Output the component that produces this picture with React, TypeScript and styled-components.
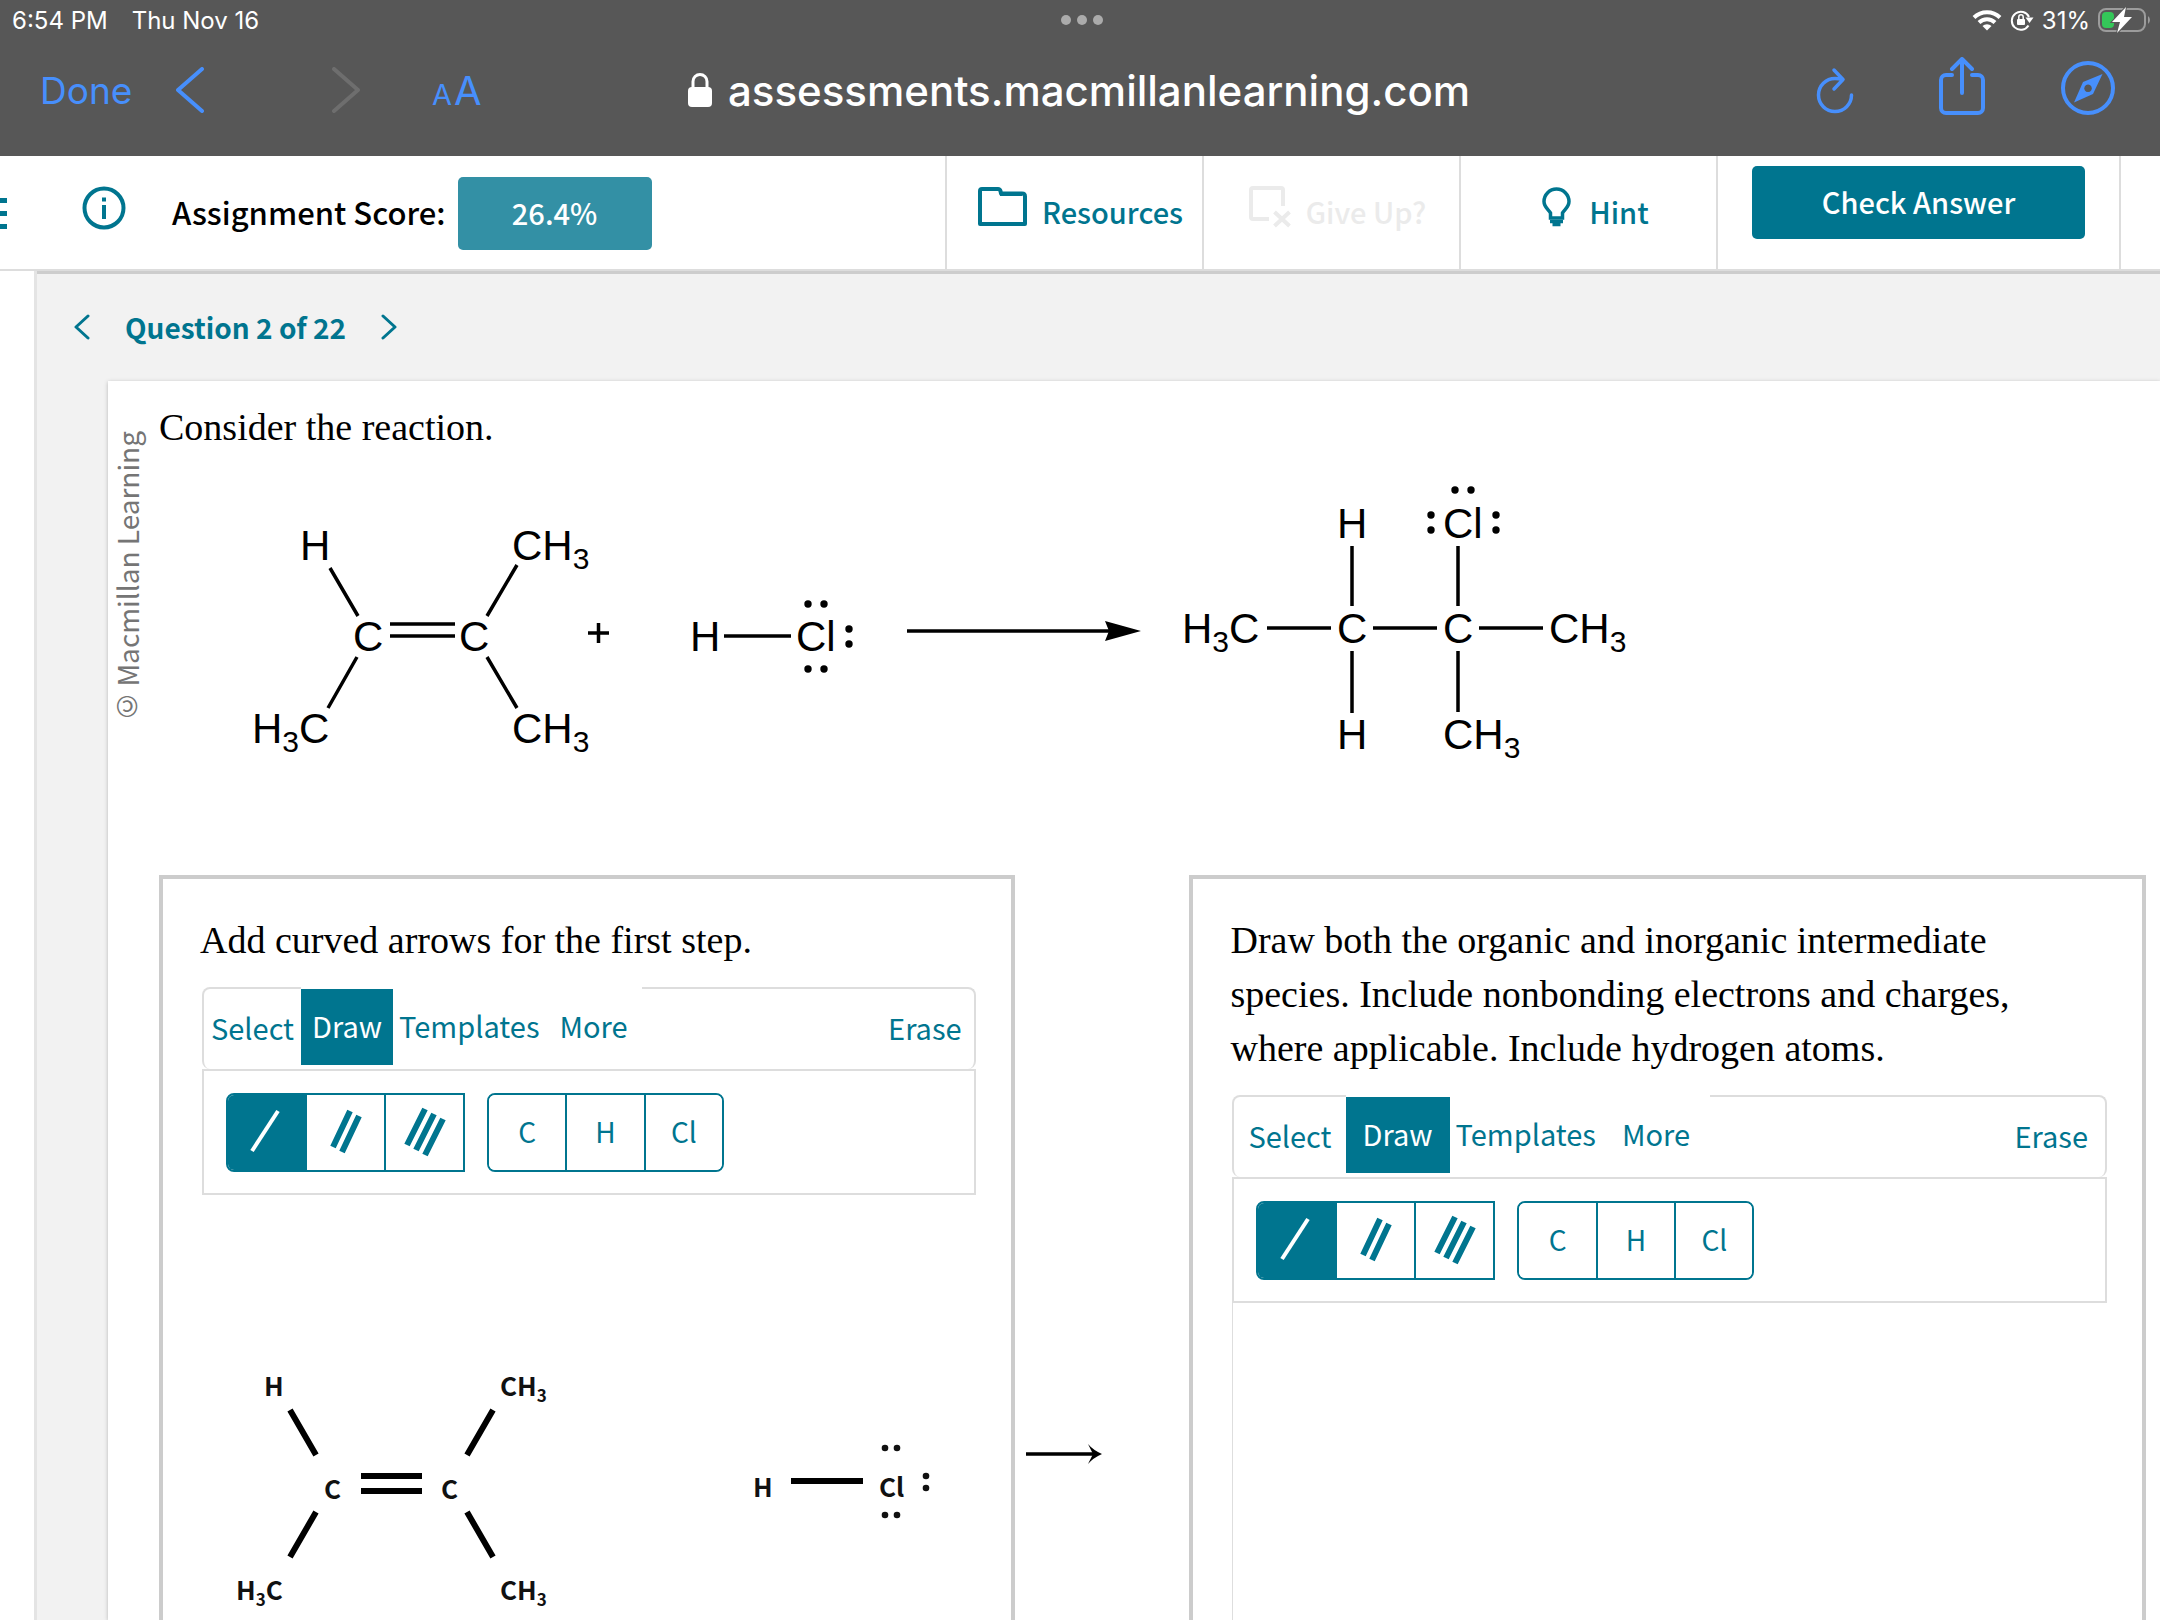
import React from 'react';
import styled, { createGlobalStyle, css } from 'styled-components';

const sans = "'Noto Sans CJK SC', 'Noto Sans', sans-serif";
const system = "Inter, 'Liberation Sans', sans-serif";
const serif = "'Liberation Serif', 'Times New Roman', serif";
const teal = '#00758f';
const line = '#dddddd';
const blue = '#478ffc';

const GlobalStyle = createGlobalStyle`
  * { box-sizing: border-box; }
  body { margin: 0; background: #fff; overflow: hidden; }
  button { margin: 0; padding: 0; border: 0; background: none; font: inherit; color: inherit; cursor: pointer; }
  p { margin: 0; }
  svg { display: block; flex: none; }
`;

const Page = styled.div`
  display: flex;
  flex-direction: column;
  height: 100vh;
  overflow: hidden;
  font-family: ${sans};
`;

/* ---------- browser chrome ---------- */

const Chrome = styled.header`
  flex: none;
  background: #575757;
  color: #fff;
  font-family: ${system};
  padding-bottom: 16px;
`;

const ChromeRow = styled.div`
  display: grid;
  grid-template-columns: 1fr auto 1fr;
  align-items: center;
`;

const StatusRow = styled(ChromeRow)`
  height: 40px;
  padding: 0 8px 0 12px;
  font-size: 24px;
`;

const NavRow = styled(ChromeRow)`
  height: 100px;
  padding: 0 42px 0 40px;
`;

const Clock = styled.div`
  display: flex;
  gap: 24px;
`;

const StatusIcons = styled.div`
  display: flex;
  justify-content: flex-end;
  align-items: center;
  gap: 8px;
`;

const NavLeft = styled.div`
  display: flex;
  align-items: center;
  color: ${blue};
`;

const DoneButton = styled.button`
  font-size: 37px;
  width: 136px;
  text-align: left;
`;

const ArrowButton = styled.button<{ $off?: boolean }>`
  color: ${(p) => (p.$off ? '#6e6e6e' : blue)};
  width: ${(p) => (p.$off ? '100px' : '156px')};
`;

const TextSize = styled.button`
  display: flex;
  align-items: baseline;
  gap: 2px;
  font-size: 40px;
  small { font-size: 29px; }
`;

const Address = styled.div`
  display: flex;
  align-items: center;
  gap: 16px;
  font-size: 42px;
  font-weight: 500;
`;

const NavRight = styled.div`
  display: flex;
  justify-content: flex-end;
  align-items: center;
  gap: 66px;
  color: ${blue};
`;

/* ---------- assignment bar ---------- */

const AssignmentBar = styled.div`
  flex: none;
  display: flex;
  height: 115px;
  padding-right: 39px;
  border-bottom: 2px solid ${line};
  font-size: 29px;
  font-weight: 500;
`;

const ScoreArea = styled.div`
  flex: 1;
  display: flex;
  align-items: center;
  padding-top: 2px;
  color: #000;
`;

const raised = css`
  svg { margin-bottom: 12px; }
`;

const InfoButton = styled.button`
  ${raised}
  margin: 0 46px 0 74px;
  color: ${teal};
`;

const Score = styled.output`
  display: flex;
  align-items: center;
  justify-content: center;
  width: 194px;
  height: 73px;
  margin-left: 12px;
  padding-bottom: 4px;
  border-radius: 5px;
  background: #3390a5;
  color: #fff;
`;

const Label = styled.span<{ $large?: boolean }>`
  padding-bottom: 4px;
  font-size: ${(p) => (p.$large ? '31px' : '29px')};
`;

const BarButton = styled.button`
  ${raised}
  display: flex;
  align-items: center;
  justify-content: center;
  gap: 15px;
  width: 257px;
  padding-left: 12px;
  border-left: 2px solid ${line};
  color: ${teal};
  &:disabled { color: #ebebeb; cursor: default; }
`;

const CheckCell = styled.div`
  display: flex;
  align-items: center;
  justify-content: center;
  width: 405px;
  padding-bottom: 20px;
  border: solid ${line};
  border-width: 0 2px;
`;

const CheckButton = styled.button`
  width: 333px;
  height: 73px;
  padding-bottom: 4px;
  border-radius: 5px;
  background: ${teal};
  color: #fff;
`;

/* ---------- question ---------- */

const Body = styled.div`
  flex: 1;
  display: flex;
  min-height: 0;
`;

const Sidebar = styled.aside`
  flex: none;
  width: 37px;
  border-right: 3px solid #e4e4e4;
`;

const Main = styled.main`
  flex: 1;
  min-width: 0;
  display: flex;
  flex-direction: column;
  background: #f2f2f2;
  border-top: 3px solid #cdcdcd;
`;

const QuestionNav = styled.nav`
  flex: none;
  display: flex;
  align-items: center;
  gap: 35px;
  height: 107px;
  padding: 0 0 2px 37px;
  color: ${teal};
  font-size: 28px;
  font-weight: 700;
`;

const Card = styled.section`
  flex: 1;
  display: flex;
  min-height: 0;
  margin-left: 71px;
  background: #fff;
  box-shadow: 0 1px 4px rgba(0, 0, 0, 0.25);
`;

const Copyright = styled.div`
  flex: none;
  width: 51px;
  padding-top: 50px;
  span {
    display: block;
    writing-mode: vertical-rl;
    transform: rotate(180deg);
    width: 38px;
    line-height: 38px;
    font-size: 28px;
    color: #757575;
  }
`;

const Content = styled.div`
  flex: 1;
  min-width: 0;
  display: flex;
  flex-direction: column;
  padding: 19px 14px 0 0;
`;

const Prose = styled.p`
  font-family: ${serif};
  font-size: 38px;
  line-height: 54px;
  color: #000;
`;

const Figure = styled.figure`
  margin: 23px 0 108px;
`;

const Steps = styled.div`
  flex: 1;
  min-height: 0;
  display: grid;
  grid-template-columns: 856fr 175fr 957fr;
`;

const Panel = styled.section`
  display: flex;
  flex-direction: column;
  min-width: 0;
  padding: 34px 35px 0 37px;
  border: 4px solid #cccccc;
  border-bottom: 0;
`;

const StepArrow = styled.div`
  padding: 568px 0 0 11px;
`;

const Editor = styled.div`
  flex: 1;
  display: flex;
  flex-direction: column;
  margin: 20px 0 0 2px;
  color: ${teal};
  font-size: 29px;
`;

const Menu = styled.div`
  display: flex;
  height: 82px;
  border: 2px solid ${line};
  border-bottom: 0;
  border-radius: 8px;
`;

const MenuButton = styled.button<{ $pad: number }>`
  padding: 0 ${(p) => p.$pad}px 4px;
`;

const Tabs = styled.div`
  display: flex;
  align-self: flex-start;
  margin-top: -2px;
  border-top: 2px solid #fff;
`;

const Tab = styled.button<{ $pad: number; $active?: boolean }>`
  height: 76px;
  padding: 0 ${(p) => p.$pad}px 4px;
  background: ${(p) => (p.$active ? teal : 'transparent')};
  color: ${(p) => (p.$active ? '#fff' : teal)};
`;

const EraseButton = styled(MenuButton)`
  margin-left: auto;
`;

const Tools = styled.div`
  display: flex;
  gap: 22px;
  height: 126px;
  padding: 22px;
  border: 2px solid ${line};
`;

const Group = styled.div<{ $round?: boolean }>`
  display: flex;
  width: ${(p) => (p.$round ? '237px' : '239px')};
  height: 79px;
  border: 2px solid ${teal};
  border-radius: ${(p) => (p.$round ? '8px' : '8px 0 0 8px')};
  overflow: hidden;
`;

const ToolButton = styled.button<{ $active?: boolean }>`
  display: flex;
  flex: 1;
  align-items: center;
  justify-content: center;
  padding-bottom: 4px;
  font-size: 28px;
  background: ${(p) => (p.$active ? teal : '#fff')};
  color: ${(p) => (p.$active ? '#fff' : teal)};
  & + & { border-left: 2px solid ${teal}; }
`;

const Canvas = styled.div<{ $framed?: boolean }>`
  flex: 1;
  min-height: 0;
  overflow: hidden;
  border: solid ${(p) => (p.$framed ? '#dedede' : 'transparent')};
  border-width: 0 0 0 1px;
`;

/* ---------- drawings ---------- */

const Molecule = styled.svg`
  font-family: 'Liberation Sans', Arial, sans-serif;
  font-size: 42px;
  fill: #000;
  path { stroke: #000; stroke-width: 3.5; fill: none; }
  .sub { font-size: 30px; }
`;

const Sketch = styled.svg`
  font-family: ${sans};
  font-weight: 700;
  font-size: 26px;
  fill: #111;
  path { stroke: #000; stroke-width: 6; fill: none; }
  .sub { font-size: 17px; }
`;

const Dots = ({ at, r }: { at: number[][]; r: number }) => (
  <>
    {at.map(([x, y]) => (
      <circle key={`${x}-${y}`} cx={x} cy={y} r={r} />
    ))}
  </>
);

const Methyl = ({ x, y, drop = 9 }: { x: number; y: number; drop?: number }) => (
  <text x={x} y={y}>
    CH<tspan className="sub" dy={drop}>3</tspan>
  </text>
);

const MethylLeft = ({ x, y, drop = 9 }: { x: number; y: number; drop?: number }) => (
  <text x={x} y={y}>
    H<tspan className="sub" dy={drop}>3</tspan>
    <tspan dy={-drop}>C</tspan>
  </text>
);

const Reaction = () => (
  <Molecule width="1480" height="290" role="img" aria-label="2-methyl-2-butene plus HCl gives 2-chloro-2-methylbutane">
    <text x="141" y="83">H</text>
    <Methyl x={353} y={83} />
    <text x="194" y="174">C</text>
    <text x="300" y="174">C</text>
    <MethylLeft x={93} y={266} />
    <Methyl x={353} y={266} />
    <path d="M171 91 199 139M358 88 328 139M198 180 169 231M328 180 358 231M231 147H296M231 159H296" />
    <path d="M429 156H450M439.500 146V166" />
    <text x="531" y="174">H</text>
    <text x="637" y="174">Cl</text>
    <path d="M565 159H632" />
    <Dots r={3.7} at={[[649, 127], [665, 127], [690, 152], [690, 167], [649, 192], [665, 192]]} />
    <path d="M748 154H952" />
    <polygon points="946,144 982,154 946,164 950,154" />
    <text x="1178" y="61">H</text>
    <text x="1284" y="61">Cl</text>
    <Dots r={3.7} at={[[1296, 13], [1312, 13], [1272, 38], [1272, 53], [1337, 38], [1337, 53]]} />
    <MethylLeft x={1023} y={166} />
    <text x="1178" y="166">C</text>
    <text x="1284" y="166">C</text>
    <Methyl x={1390} y={166} />
    <text x="1178" y="272">H</text>
    <Methyl x={1284} y={272} />
    <path d="M1108 151H1172M1214 151H1278M1320 151H1384M1193 69V129M1299 69V129M1193 174V236M1299 174V235" />
  </Molecule>
);

const StartingSketch = () => (
  <Sketch width="772" height="430" role="img" aria-label="Editable drawing of the starting materials">
    <text x="61" y="201">H</text>
    <Methyl x={297} y={201} drop={6} />
    <text x="121" y="304">C</text>
    <text x="238" y="304">C</text>
    <MethylLeft x={33} y={405} drop={6} />
    <Methyl x={297} y={405} drop={6} />
    <path d="M87 215 113 260M290 215 264 260M113 317 87 362M264 317 290 362M158 281H219M158 296H219M588 286H660" />
    <text x="550" y="302">H</text>
    <text x="676" y="302">Cl</text>
    <Dots r={3.3} at={[[682, 253], [694, 253], [723, 281], [723, 293], [682, 320], [694, 320]]} />
  </Sketch>
);

const Chevron = ({ dir, w, h, stroke }: { dir: 'left' | 'right'; w: number; h: number; stroke: number }) => (
  <svg width={w} height={h} fill="none" stroke="currentColor" strokeWidth={stroke} strokeLinecap="round" strokeLinejoin="round">
    {dir === 'left' ? (
      <path d={`M${w - 2} 2 2 ${h / 2} ${w - 2} ${h - 2}`} />
    ) : (
      <path d={`M2 2 ${w - 2} ${h / 2} 2 ${h - 2}`} />
    )}
  </svg>
);

const Bonds = ({ count }: { count: 1 | 2 | 3 }) => (
  <svg width="46" height="52" fill="none" stroke="currentColor" strokeWidth={count === 1 ? 4 : 6}>
    {count === 1 && <path d="M34 6 8 46" />}
    {count === 2 && <path d="M27 6 10 42M36 11 19 47" />}
    {count === 3 && <path d="M23 4 5 40M32 9 14 45M41 14 23 50" />}
  </svg>
);

/* ---------- drawing editor ---------- */

const DrawingEditor = ({ wide, framed, children }: { wide?: boolean; framed?: boolean; children?: React.ReactNode }) => (
  <Editor>
    <Menu>
      <MenuButton $pad={wide ? 14 : 7}>Select</MenuButton>
      <Tabs>
        <Tab $pad={wide ? 17 : 11} $active>Draw</Tab>
        <Tab $pad={6}>Templates</Tab>
        <Tab $pad={wide ? 20 : 14}>More</Tab>
      </Tabs>
      <EraseButton $pad={wide ? 17 : 12}>Erase</EraseButton>
    </Menu>
    <Tools>
      <Group>
        <ToolButton $active aria-label="Single bond"><Bonds count={1} /></ToolButton>
        <ToolButton aria-label="Double bond"><Bonds count={2} /></ToolButton>
        <ToolButton aria-label="Triple bond"><Bonds count={3} /></ToolButton>
      </Group>
      <Group $round>
        <ToolButton>C</ToolButton>
        <ToolButton>H</ToolButton>
        <ToolButton>Cl</ToolButton>
      </Group>
    </Tools>
    <Canvas $framed={framed}>{children}</Canvas>
  </Editor>
);

export default function App() {
  return (
    <Page>
      <GlobalStyle />
      <Chrome>
        <StatusRow>
          <Clock>
            <span>6:54 PM</span>
            <span>Thu Nov 16</span>
          </Clock>
          <svg width="44" height="12" fill="#ababab">
            <circle cx="6" cy="6" r="5" />
            <circle cx="22" cy="6" r="5" />
            <circle cx="38" cy="6" r="5" />
          </svg>
          <StatusIcons>
            <svg width="30" height="22" viewBox="0 0 30 22" fill="none" stroke="#fff" strokeWidth="4">
              <path d="M2 8.500a18.500 18.500 0 0 1 26 0" />
              <path d="M7 13.500a11.500 11.500 0 0 1 16 0" />
              <path d="M15 21.500 10.500 17a6.500 6.500 0 0 1 9 0Z" fill="#fff" stroke="none" />
            </svg>
            <svg width="24" height="22" viewBox="0 0 24 22" fill="none" stroke="#fff" strokeWidth="2">
              <path d="M18.500 16.500A9 9 0 1 1 19 8" />
              <path d="M15.500 8.500h8l-4 5.500Z" fill="#fff" stroke="none" />
              <rect x="7" y="10" width="8" height="6" rx="1" fill="#fff" stroke="none" />
              <path d="M8.800 10V8a2.200 2.200 0 0 1 4.400 0v2" strokeWidth="1.500" />
            </svg>
            <span>31%</span>
            <svg width="54" height="26" viewBox="0 0 54 26">
              <rect x="1" y="2" width="46" height="22" rx="7" fill="none" stroke="#9c9c9c" strokeWidth="2" />
              <path d="M50 9a5 5 0 0 1 0 8Z" fill="#9c9c9c" />
              <rect x="4" y="5" width="12" height="16" rx="4" fill="#34c759" />
              <path d="M28 0 14 15h8l-3 11L34 10h-8Z" fill="#fff" stroke="#575757" strokeWidth="2" paintOrder="stroke" />
            </svg>
          </StatusIcons>
        </StatusRow>
        <NavRow>
          <NavLeft>
            <DoneButton>Done</DoneButton>
            <ArrowButton aria-label="Back"><Chevron dir="left" w={28} h={46} stroke={4} /></ArrowButton>
            <ArrowButton $off disabled aria-label="Forward"><Chevron dir="right" w={28} h={46} stroke={4} /></ArrowButton>
            <TextSize aria-label="Text size"><small>A</small>A</TextSize>
          </NavLeft>
          <Address>
            <svg width="24" height="36" viewBox="0 0 24 36">
              <rect x="0" y="15" width="24" height="20" rx="4" fill="#fff" />
              <path d="M5 17V9.500a7 7 0 0 1 14 0V17" fill="none" stroke="#fff" strokeWidth="3" />
            </svg>
            <span>assessments.macmillanlearning.com</span>
          </Address>
          <NavRight>
            <button aria-label="Reload">
              <svg width="60" height="60" viewBox="0 0 60 60" fill="none" stroke="currentColor" strokeWidth="3.500" strokeLinecap="round" strokeLinejoin="round">
                <path d="M45.500 35A16.500 16.500 0 1 1 29 18.500q4 0 7.500 1" />
                <path d="M28 10 37 19.500 28 29" />
              </svg>
            </button>
            <button aria-label="Share">
              <svg width="60" height="66" viewBox="0 0 60 66" fill="none" stroke="currentColor" strokeWidth="4" strokeLinecap="round" strokeLinejoin="round">
                <path d="M20 18h-6a5 5 0 0 0-5 5v28a5 5 0 0 0 5 5h32a5 5 0 0 0 5-5V23a5 5 0 0 0-5-5h-6" />
                <path d="M30 36V3M20 12 30 2l10 10" />
              </svg>
            </button>
            <button aria-label="Open in Safari">
              <svg width="60" height="60" viewBox="0 0 60 60" fill="none" stroke="currentColor" strokeWidth="4">
                <circle cx="30" cy="28" r="25" />
                <path fillRule="evenodd" d="M44.500 14 35 34 16 42.500 25 22ZM30 24.500a3.800 3.800 0 1 0 .1 0Z" fill="currentColor" stroke="none" />
              </svg>
            </button>
          </NavRight>
        </NavRow>
      </Chrome>

      <AssignmentBar>
        <ScoreArea>
          <button aria-label="Menu">
            <svg width="8" height="32" fill={teal}>
              <path d="M0 0h7v5H0ZM0 13h7v5H0ZM0 26h7v5H0Z" />
            </svg>
          </button>
          <InfoButton aria-label="Information">
            <svg width="44" height="44" viewBox="0 0 44 44" fill="none" stroke="currentColor" strokeWidth="4">
              <circle cx="22" cy="22" r="19.500" />
              <path d="M22 19v14M22 11.500v4" />
            </svg>
          </InfoButton>
          <Label $large id="score-label">Assignment Score:</Label>
          <Score aria-labelledby="score-label">26.4%</Score>
        </ScoreArea>
        <BarButton>
          <svg width="49" height="40" viewBox="0 0 49 40" fill="none" stroke="currentColor" strokeWidth="4" strokeLinejoin="round">
            <path d="M2 37V4q0-2 2-2h16q2 0 2.500 2l.5 2.500h21q3 0 3 3V37Z" />
            <path d="M22 7h22" />
          </svg>
          <Label>Resources</Label>
        </BarButton>
        <BarButton disabled>
          <svg width="42" height="42" viewBox="0 0 42 42" fill="none" stroke="currentColor" strokeWidth="4">
            <path d="M20 33H4q-2 0-2-2V4q0-2 2-2h28q2 0 2 2v16" />
            <path d="m25.500 26 15 14M40.500 26l-15 14" />
          </svg>
          <Label>Give Up?</Label>
        </BarButton>
        <BarButton>
          <svg width="34" height="40" viewBox="0 0 34 40" fill="none" stroke="currentColor" strokeWidth="3.500">
            <path d="M10.500 31v-5C8 22 4 20 4 14.500a12.500 12.500 0 0 1 25 0C29 20 25 22 22.500 26v5Z" />
            <path d="M10 34.500h13M12.500 37.500h8" />
          </svg>
          <Label>Hint</Label>
        </BarButton>
        <CheckCell>
          <CheckButton>Check Answer</CheckButton>
        </CheckCell>
      </AssignmentBar>

      <Body>
        <Sidebar />
        <Main>
          <QuestionNav>
            <button aria-label="Previous question"><Chevron dir="left" w={16} h={26} stroke={3} /></button>
            <span>Question 2 of 22</span>
            <button aria-label="Next question"><Chevron dir="right" w={16} h={26} stroke={3} /></button>
          </QuestionNav>
          <Card>
            <Copyright><span>© Macmillan Learning</span></Copyright>
            <Content>
              <Prose>Consider the reaction.</Prose>
              <Figure><Reaction /></Figure>
              <Steps>
                <Panel>
                  <Prose>Add curved arrows for the first step.</Prose>
                  <DrawingEditor><StartingSketch /></DrawingEditor>
                </Panel>
                <StepArrow>
                  <svg width="78" height="22" viewBox="0 0 78 22">
                    <path d="M0 11H68" stroke="#000" strokeWidth="3.500" />
                    <path d="M62 1Q67 7 76 11 67 15 62 21 65 15 67 11 65 7 62 1Z" fill="#000" />
                  </svg>
                </StepArrow>
                <Panel>
                  <Prose>
                    Draw both the organic and inorganic intermediate species. Include nonbonding electrons and charges, where
                    applicable. Include hydrogen atoms.
                  </Prose>
                  <DrawingEditor wide framed />
                </Panel>
              </Steps>
            </Content>
          </Card>
        </Main>
      </Body>
    </Page>
  );
}
